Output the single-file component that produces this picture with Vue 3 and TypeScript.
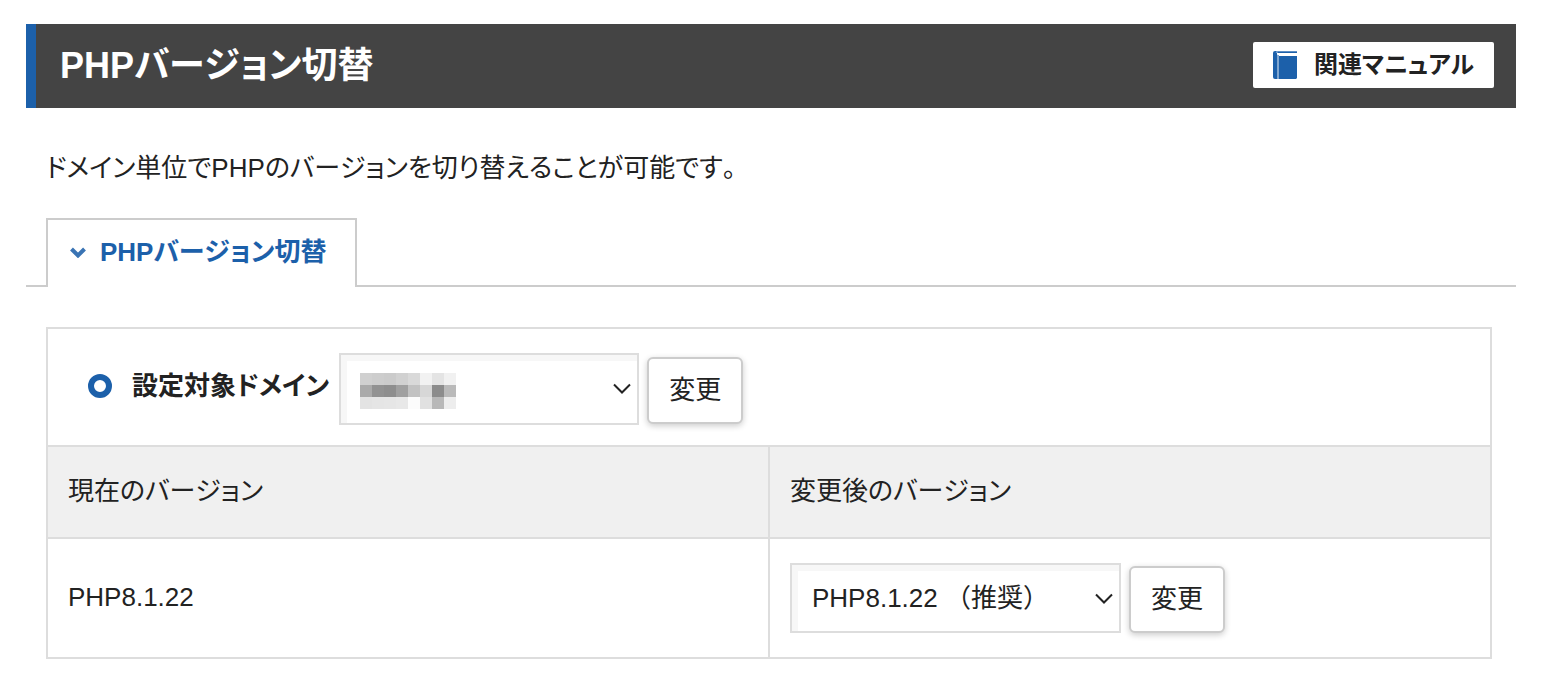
<script setup lang="ts">
import { ref } from 'vue'

const domain = ref('')
const version = ref('8.1.22')

// Grey levels of the mosaic that hides the domain name, row by row
const mosaic: string[][] = [
  ['#d0d0d0', '#cdcdcd', '#cbcbcb', '#d1d1d1', '#d9d9d9', '#f2f2f2', '#e4e4e4', '#f1f1f1'],
  ['#aaaaaa', '#929292', '#8e8e8e', '#a0a0a0', '#c2c2c2', '#d7d7d7', '#8c8c8c', '#bababa'],
  ['#e3e3e3', '#e5e5e5', '#e6e6e6', '#e8e8e8', '#fcfcfc', '#e1e1e1', '#b8b8b8', '#ededed'],
]
</script>

<template>
  <main class="page">
    <header class="title-bar">
      <h1>PHPバージョン切替</h1>
      <a class="manual" href="#manual">
        <svg class="book" width="24" height="28" viewBox="0 0 24 28" aria-hidden="true">
          <path d="M2 0H24V27L23 28H2Q0 28 0 26V2Q0 0 2 0Z" fill="#1c60aa" />
          <path d="M24 0.5H3" stroke="#5d8dc3" stroke-width="1" />
          <path d="M3 2Q3 1 5 1" fill="none" stroke="#8db0d5" stroke-width="1" />
          <path d="M4 2H24V5H6Q4 5 4 3Z" fill="#fff" />
          <path d="M5 4V28" stroke="#7fa6d0" stroke-width="2" />
        </svg>
        関連マニュアル
      </a>
    </header>

    <p class="lead">ドメイン単位でPHPのバージョンを切り替えることが可能です。</p>

    <nav class="tabs">
      <a class="tab" href="#php" aria-current="page">
        <svg width="16" height="12" viewBox="0 0 16 12" aria-hidden="true">
          <path d="M1.5 3L8 9.5L14.5 3" fill="none" stroke="#3a74b4" stroke-width="4" />
        </svg>
        PHPバージョン切替
      </a>
    </nav>

    <table id="php" class="settings">
      <thead>
        <tr class="domain-row">
          <td colspan="2">
            <div class="controls">
              <div class="caption">
                <span class="ring"></span>
                <label for="domain">設定対象ドメイン</label>
              </div>
              <span class="select-box domain-box">
                <select id="domain" v-model="domain">
                  <option value=""></option>
                </select>
                <svg class="mosaic" width="96" height="36" viewBox="0 0 96 36" shape-rendering="crispEdges" aria-hidden="true">
                  <template v-for="(row, y) in mosaic" :key="y">
                    <rect v-for="(fill, x) in row" :key="x" :x="x * 12" :y="y * 12" width="12" height="12" :fill="fill" />
                  </template>
                </svg>
                <svg class="arrow" width="18" height="12" viewBox="0 0 18 12" aria-hidden="true">
                  <path d="M1 1.5L9 9.5L17 1.5" />
                </svg>
              </span>
              <button type="button">変更</button>
            </div>
          </td>
        </tr>
        <tr class="head-row">
          <th scope="col">現在のバージョン</th>
          <th scope="col"><label for="version">変更後のバージョン</label></th>
        </tr>
      </thead>
      <tbody>
        <tr class="version-row">
          <td>PHP8.1.22</td>
          <td>
            <div class="controls">
              <span class="select-box version-box">
                <select id="version" v-model="version">
                  <option value="8.1.22">PHP8.1.22 （推奨）</option>
                </select>
                <svg class="arrow" width="18" height="12" viewBox="0 0 18 12" aria-hidden="true">
                  <path d="M1 1.5L9 9.5L17 1.5" />
                </svg>
              </span>
              <button type="button">変更</button>
            </div>
          </td>
        </tr>
      </tbody>
    </table>
  </main>
</template>

<style>
body {
  margin: 0;
  background: #fff;
}
</style>

<style scoped>
.page {
  padding: 24px 34px 38px 26px;
  color: #222;
  font-family: "Liberation Sans", "Noto Sans CJK JP", sans-serif;
  font-size: 26px;
  line-height: 40px;
  font-feature-settings: "palt";
  font-kerning: none;
}

.title-bar {
  display: flex;
  align-items: center;
  justify-content: space-between;
  box-sizing: border-box;
  min-height: 84px;
  padding: 0 22px 2px 24px;
  border-left: 10px solid #1c60aa;
  background: #444;
}

h1 {
  margin: 0;
  padding-top: 2px;
  color: #fff;
  font-size: 36px;
  line-height: 48px;
}

.manual {
  display: flex;
  align-items: center;
  gap: 17px;
  padding: 0 20px;
  border-radius: 2px;
  background: #fff;
  color: #222;
  font-size: 24px;
  font-weight: bold;
  line-height: 46px;
  text-decoration: none;
}

.lead {
  margin: 40px 20px 30px;
}

.tabs {
  display: flex;
  padding: 0 20px;
  box-shadow: inset 0 -2px #ccc;
}

.tab {
  display: flex;
  align-items: center;
  gap: 14px;
  box-sizing: border-box;
  height: 69px;
  padding: 0 29px 3px 22px;
  border: 2px solid #ccc;
  border-bottom: 0;
  background: #fff;
  color: #1c60aa;
  font-weight: bold;
  text-decoration: none;
}

.settings {
  width: calc(100% - 44px);
  margin: 40px 24px 0 20px;
  border-collapse: collapse;
  table-layout: fixed;
}

td,
th {
  padding: 0 20px 2px;
  border: 2px solid #ddd;
  font-weight: normal;
  text-align: left;
}

.domain-row td {
  height: 112px;
  padding: 4px 20px 0 40px;
}

.head-row th {
  height: 88px;
  background: #f0f0f0;
}

.version-row td {
  height: 116px;
}

.version-row .controls {
  padding-top: 2px;
}

.controls,
.caption {
  display: flex;
  align-items: center;
}

.caption {
  padding-bottom: 6px;
  font-weight: bold;
}

.ring {
  box-sizing: border-box;
  width: 24px;
  height: 24px;
  margin-right: 20px;
  border: 6px solid #1c60aa;
  border-radius: 50%;
}

.select-box {
  position: relative;
  margin-right: 8px;
}

.domain-box {
  width: 300px;
  margin-left: 10px;
}

.version-box {
  width: 331px;
}

select {
  display: block;
  box-sizing: border-box;
  width: 100%;
  height: 70px;
  padding: 0 40px 0 20px;
  border: 2px solid #ddd;
  border-radius: 0;
  background: #fff;
  box-shadow: inset 6px 6px #f7f7f7;
  color: #222;
  font: inherit;
  font-feature-settings: normal;
  font-kerning: auto;
  appearance: none;
}

.domain-box select {
  height: 72px;
}

.mosaic {
  position: absolute;
  top: 20px;
  left: 21px;
  pointer-events: none;
}

.arrow {
  position: absolute;
  top: 30px;
  right: 8px;
  fill: none;
  stroke: #222;
  stroke-width: 2;
  pointer-events: none;
}

button {
  box-sizing: border-box;
  height: 67px;
  margin-top: 2px;
  padding: 0 20px;
  border: 2px solid #ccc;
  border-radius: 6px;
  background: #fff;
  box-shadow: 0 2px 6px rgba(0, 0, 0, 0.2);
  color: #222;
  font: inherit;
}
</style>
